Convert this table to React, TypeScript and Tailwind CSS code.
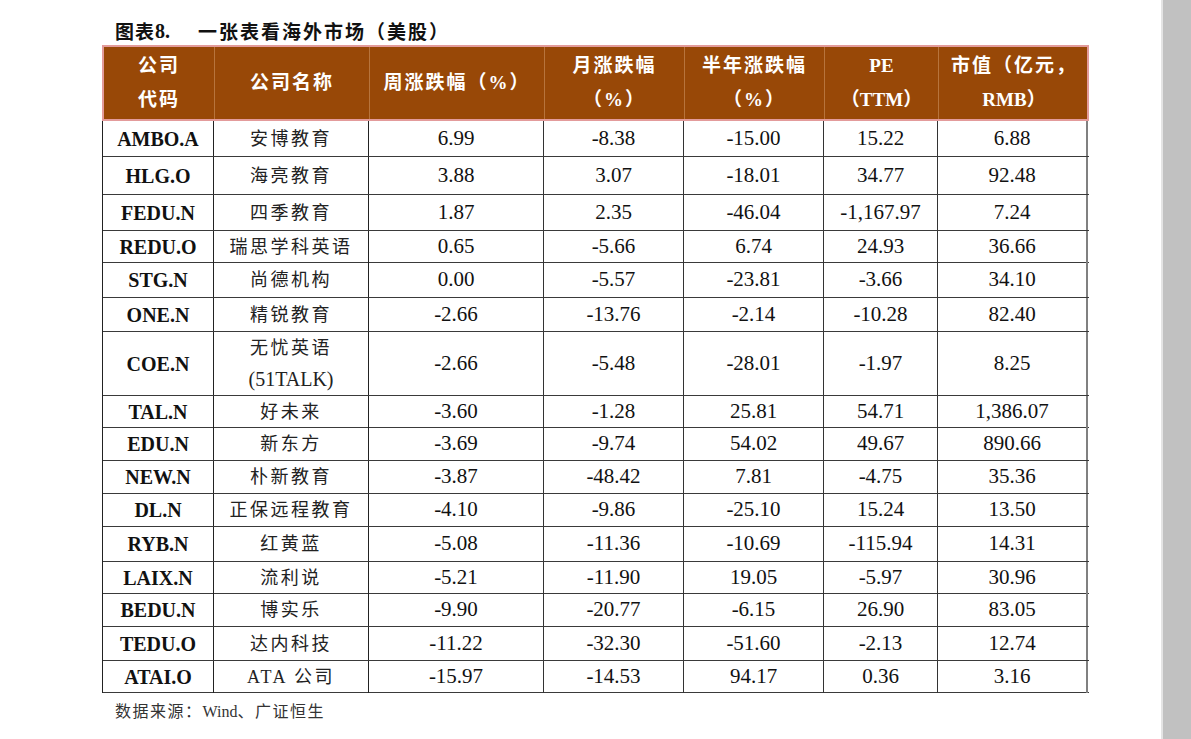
const serif = "font-['Liberation_Serif','Noto_Sans_CJK_SC',serif]";
const cjk = "font-['Noto_Sans_CJK_SC',sans-serif]";

const cols = "grid grid-cols-[111px_155px_175px_140px_140px_114px_150px]";

type Row = {
  code: string;
  name: string[];
  week: string;
  month: string;
  half: string;
  pe: string;
  cap: string;
  h: string;
};

const rows: Row[] = [
  { code: "AMBO.A", name: ["安博教育"], week: "6.99", month: "-8.38", half: "-15.00", pe: "15.22", cap: "6.88", h: "h-[36px]" },
  { code: "HLG.O", name: ["海亮教育"], week: "3.88", month: "3.07", half: "-18.01", pe: "34.77", cap: "92.48", h: "h-[38px]" },
  { code: "FEDU.N", name: ["四季教育"], week: "1.87", month: "2.35", half: "-46.04", pe: "-1,167.97", cap: "7.24", h: "h-[36px]" },
  { code: "REDU.O", name: ["瑞思学科英语"], week: "0.65", month: "-5.66", half: "6.74", pe: "24.93", cap: "36.66", h: "h-[32px]" },
  { code: "STG.N", name: ["尚德机构"], week: "0.00", month: "-5.57", half: "-23.81", pe: "-3.66", cap: "34.10", h: "h-[35px]" },
  { code: "ONE.N", name: ["精锐教育"], week: "-2.66", month: "-13.76", half: "-2.14", pe: "-10.28", cap: "82.40", h: "h-[34px]" },
  { code: "COE.N", name: ["无忧英语", "(51TALK)"], week: "-2.66", month: "-5.48", half: "-28.01", pe: "-1.97", cap: "8.25", h: "h-[64px]" },
  { code: "TAL.N", name: ["好未来"], week: "-3.60", month: "-1.28", half: "25.81", pe: "54.71", cap: "1,386.07", h: "h-[32px]" },
  { code: "EDU.N", name: ["新东方"], week: "-3.69", month: "-9.74", half: "54.02", pe: "49.67", cap: "890.66", h: "h-[33px]" },
  { code: "NEW.N", name: ["朴新教育"], week: "-3.87", month: "-48.42", half: "7.81", pe: "-4.75", cap: "35.36", h: "h-[33px]" },
  { code: "DL.N", name: ["正保远程教育"], week: "-4.10", month: "-9.86", half: "-25.10", pe: "15.24", cap: "13.50", h: "h-[33px]" },
  { code: "RYB.N", name: ["红黄蓝"], week: "-5.08", month: "-11.36", half: "-10.69", pe: "-115.94", cap: "14.31", h: "h-[35px]" },
  { code: "LAIX.N", name: ["流利说"], week: "-5.21", month: "-11.90", half: "19.05", pe: "-5.97", cap: "30.96", h: "h-[32px]" },
  { code: "BEDU.N", name: ["博实乐"], week: "-9.90", month: "-20.77", half: "-6.15", pe: "26.90", cap: "83.05", h: "h-[33px]" },
  { code: "TEDU.O", name: ["达内科技"], week: "-11.22", month: "-32.30", half: "-51.60", pe: "-2.13", cap: "12.74", h: "h-[34px]" },
  { code: "ATAI.O", name: ["ATA 公司"], week: "-15.97", month: "-14.53", half: "94.17", pe: "0.36", cap: "3.16", h: "h-[32px]" },
];

const headers: string[][] = [
  ["公司", "代码"],
  ["公司名称"],
  ["周涨跌幅（%）"],
  ["月涨跌幅", "（%）"],
  ["半年涨跌幅", "（%）"],
  ["PE", "（TTM）"],
  ["市值（亿元，", "RMB）"],
];

function HeaderCell({ lines, last }: { lines: string[]; last?: boolean }) {
  return (
    <div
      className={`flex flex-col items-center justify-center ${last ? "" : "border-r border-[#b7743c]"}`}
    >
      {lines.map((l) => (
        <span
          key={l}
          className={`${serif} text-[19px] font-bold leading-[34px] text-white ${
            /[A-Z]/.test(l) ? "tracking-normal" : "tracking-[2px]"
          }`}
        >
          {l}
        </span>
      ))}
    </div>
  );
}

function NumCell({ v, last }: { v: string; last?: boolean }) {
  return (
    <div
      className={`flex items-center justify-center ${serif} text-[21px] text-[#111] ${
        last ? "border-r-2 border-[#808080]" : "border-r border-[#333]"
      }`}
    >
      {v}
    </div>
  );
}

export default function App() {
  return (
    <div className="flex h-[739px] w-[1191px] overflow-hidden bg-white">
      <div className="flex flex-1 flex-col pl-[102px] pt-[17px]">
        <div className={`flex h-[28px] items-center pl-[13px] ${serif} text-[19px] font-bold text-[#111]`}>
          <span className={`${cjk} font-bold tracking-[1px]`}>图表</span>
          <span className="text-[20px] font-bold">8.</span>
          <span className={`${cjk} ml-[28px] font-bold tracking-[2px]`}>一张表看海外市场（美股）</span>
        </div>

        <div className="w-[987px]">
          <div className={`${cols} h-[76px] border-2 border-[#e39b9b] bg-[#984807]`}>
            {headers.map((h, i) => (
              <HeaderCell key={i} lines={h} last={i === headers.length - 1} />
            ))}
          </div>

          <div className="border-l border-[#222]">
            {rows.map((r) => (
              <div key={r.code} className={`${cols} ${r.h} border-b border-[#3a3a3a]`}>
                <div
                  className={`flex items-center justify-center border-r border-[#222] ${serif} text-[20px] font-bold text-[#111]`}
                >
                  {r.code}
                </div>
                <div className="flex flex-col items-center justify-center border-r border-[#222]">
                  {r.name.map((n) => (
                    <span
                      key={n}
                      className={`${
                        n.startsWith("(")
                          ? `${serif} text-[20px] leading-[32px]`
                          : `${serif} text-[18px] leading-[30px] tracking-[2.5px]`
                      } text-[#222]`}
                    >
                      {n}
                    </span>
                  ))}
                </div>
                <NumCell v={r.week} />
                <NumCell v={r.month} />
                <NumCell v={r.half} />
                <NumCell v={r.pe} />
                <NumCell v={r.cap} last />
              </div>
            ))}
          </div>
        </div>

        <div className={`mt-[7px] pl-[13px] ${serif} text-[16px] text-[#333]`}>
          <span className="tracking-[1.5px]">数据来源：</span>
          <span>Wind</span>
          <span className="tracking-[1.5px]">、广证恒生</span>
        </div>
      </div>

      <div className="h-full w-[30px] border-l-2 border-[#e4e4e4] bg-[#c1c1c1]" />
    </div>
  );
}
